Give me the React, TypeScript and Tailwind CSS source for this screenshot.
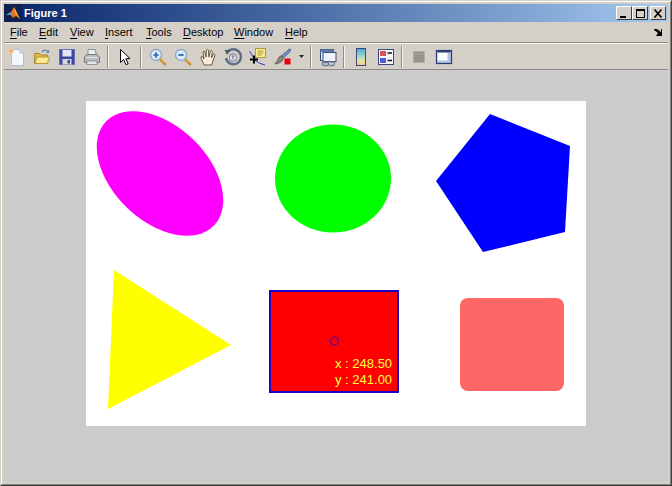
import React from "react";

function Ico({ children }: { children: React.ReactNode }) {
  return (
    <div className="w-[25px] h-[25px] flex items-center justify-center shrink-0">
      <svg width="20" height="20" viewBox="0 0 20 20" className="block">{children}</svg>
    </div>
  );
}

function Sep() {
  return (
    <div className="w-[8px] h-[25px] flex justify-center items-center shrink-0">
      <div className="w-[1px] h-[22px] bg-[#8f8d88]" />
      <div className="w-[1px] h-[22px] bg-[#f4f3ef]" />
    </div>
  );
}

function Lens({ plus }: { plus: boolean }) {
  return (
    <>
      <path d="M11.5 11.5 L17 17" stroke="#c98a2a" strokeWidth="2.6" strokeLinecap="round" />
      <path d="M12 11 L17 16" stroke="#f3c860" strokeWidth="1" />
      <circle cx="8" cy="8" r="5.5" fill="#dcecf8" stroke="#8aa4c4" strokeWidth="1.3" />
      <path d={plus ? "M5.3 8 H10.7 M8 5.3 V10.7" : "M5.3 8 H10.7"} stroke="#2f62b4" strokeWidth="1.7" />
    </>
  );
}

const menus = [
  { label: "File", cls: "w-[29px]" },
  { label: "Edit", cls: "w-[31px]" },
  { label: "View", cls: "w-[35px]" },
  { label: "Insert", cls: "w-[41px]" },
  { label: "Tools", cls: "w-[37px]" },
  { label: "Desktop", cls: "w-[51px]" },
  { label: "Window", cls: "w-[51px]" },
  { label: "Help", cls: "w-[30px]" },
];

export default function App() {
  return (
    <div className="w-[672px] h-[486px] overflow-hidden bg-[#d4d0c8] border-t border-l border-t-[#d4d0c8] border-l-[#d4d0c8] border-r border-b border-r-[#404040] border-b-[#404040]">
      <div className="w-full h-full flex flex-col border-t border-l border-t-white border-l-white border-r border-b border-r-[#808080] border-b-[#808080] p-[2px] font-['Liberation_Sans',Arial,sans-serif]">
        {/* Title bar */}
        <div className="h-[18px] shrink-0 flex items-center bg-gradient-to-r from-[#0a246a] to-[#a6caf0] pr-[2px]">
          <div className="w-[18px] h-[18px] bg-[#10204f] flex items-center justify-center shrink-0">
            <svg width="16" height="16" viewBox="0 0 16 16" className="block">
              <path d="M1 10 L6 7 L9 2 L13 10 L15 14 L11 11 L8 13 L5 9 Z" fill="#e8701a" />
              <path d="M1 10 L6 7 L8 9 L5 10 Z" fill="#4fa0d8" />
              <path d="M9 2 L13 10 L15 14 L10 8 Z" fill="#f4b040" />
            </svg>
          </div>
          <span className="ml-[2px] text-white text-[11px] font-bold leading-none">Figure 1</span>
          <div className="ml-auto flex items-center">
            <button className="w-[16px] h-[14px] bg-[#d4d0c8] border border-t-white border-l-white border-r-[#404040] border-b-[#404040] relative">
              <span className="absolute left-[3px] bottom-[1px] w-[6px] h-[2px] bg-black" />
            </button>
            <button className="w-[16px] h-[14px] bg-[#d4d0c8] border border-t-white border-l-white border-r-[#404040] border-b-[#404040] flex items-center justify-center">
              <span className="w-[9px] h-[9px] border border-t-2 border-black" />
            </button>
            <button className="ml-[2px] w-[16px] h-[14px] bg-[#d4d0c8] border border-t-white border-l-white border-r-[#404040] border-b-[#404040] flex items-center justify-center">
              <svg width="10" height="9" viewBox="0 0 10 9" className="block">
                <path d="M1.5 0.5 L8.5 8.5 M8.5 0.5 L1.5 8.5" stroke="#000" strokeWidth="1.6" />
              </svg>
            </button>
          </div>
        </div>

        {/* Menu bar */}
        <div className="h-[20px] shrink-0 flex items-center pl-[6px] pr-[5px] text-[11px] text-black leading-none">
          {menus.map((m) => (
            <span key={m.label} className={m.cls}>
              <span className="underline underline-offset-2">{m.label[0]}</span>
              {m.label.slice(1)}
            </span>
          ))}
          <svg width="10" height="9" viewBox="0 0 10 9" className="ml-auto block">
            <path d="M1 1 L4 1 L8 4 L8 1 L9 1 L9 8 L3 8 L5 5 L1 2 Z" fill="#000" />
          </svg>
        </div>
        <div className="h-[1px] shrink-0 bg-[#8d8b86]" />

        {/* Toolbar */}
        <div className="h-[26px] shrink-0 flex items-center border-t border-t-[#f4f3ef]">
          <Ico>
            <path d="M4.5 2.5 H13 L16.5 6 V18.5 H4.5 Z" fill="#f4f8fd" stroke="#a7bfd8" />
            <path d="M13 2.5 V6 H16.5" fill="#cfe0f0" stroke="#a7bfd8" />
            <circle cx="4" cy="4" r="2.4" fill="#f2a468" stroke="#f8d4a8" />
          </Ico>
          <Ico>
            <path d="M2.5 6.5 H8 L9.5 8 H15.5 V16.5 H2.5 Z" fill="#e0b840" stroke="#a88a30" />
            <path d="M3 16.5 L5 10 H17.5 L15.5 16.5 Z" fill="#fbe890" stroke="#b89a38" />
            <path d="M10 5 Q13 1.5 16 4.5" fill="none" stroke="#5f87a8" strokeWidth="1.4" />
            <path d="M17 2.8 V6 H14 Z" fill="#5f87a8" />
          </Ico>
          <Ico>
            <rect x="2.5" y="2.5" width="15" height="15" fill="#3f48a0" stroke="#6a6fb8" />
            <rect x="5.5" y="3" width="9" height="6.5" fill="#e4e6f4" />
            <rect x="5.5" y="12" width="9" height="5.5" fill="#d8d8e4" />
            <rect x="10.5" y="13" width="2.5" height="3.5" fill="#3f48a0" />
          </Ico>
          <Ico>
            <path d="M6 2.5 H13 L14.5 8 H6 Z" fill="#eef0f0" stroke="#8a8f94" />
            <path d="M2.5 9.5 L5 7.5 H15 L17.5 10 V15.5 H2.5 Z" fill="#b8bcbf" stroke="#74787c" />
            <rect x="5" y="14" width="10" height="3.5" fill="#e8e8e8" stroke="#74787c" strokeWidth="0.7" />
            <path d="M4 10.5 H15" stroke="#e4e6e8" />
          </Ico>
          <Sep />
          <Ico>
            <path d="M5.5 2.5 V15.5 L8.6 12.6 L11 17.7 L13.2 16.7 L10.8 11.8 L15 11.5 Z" fill="#fff" stroke="#000" strokeWidth="1" strokeLinejoin="miter" />
          </Ico>
          <Sep />
          <Ico><Lens plus /></Ico>
          <Ico><Lens plus={false} /></Ico>
          <Ico>
            <path d="M6 18 L3 11 Q2.6 9 4.6 9.6 L6 12 L5 5 Q5.4 3.4 6.8 4.6 L8 10 L8.4 3 Q9.6 1.6 10.6 3 L10.8 10 L12.4 4 Q13.8 3 14.4 4.6 L13.4 11 L15.4 7 Q17 6.6 17 8.4 L14.6 15 L13.6 18 Z" fill="#fde8d4" stroke="#55503c" strokeWidth="0.9" strokeLinejoin="round" />
          </Ico>
          <Ico>
            <path d="M4.6 5 A7.5 7.5 0 1 1 3 11" fill="none" stroke="#5f6f85" strokeWidth="2.4" />
            <path d="M1.5 3 L7.5 3 L4 8 Z" fill="#4c5c74" />
            <circle cx="10" cy="10.5" r="3.8" fill="#dfe3e8" stroke="#6e7c90" />
            <path d="M8.5 9 H11.5 M10 9 V12.5" stroke="#5a6880" />
          </Ico>
          <Ico>
            <path d="M1.5 4 L7 13 Q11 17 17 18" fill="none" stroke="#3a3ab8" strokeWidth="1" />
            <rect x="7.5" y="1.5" width="10" height="9" fill="#f8ec8c" stroke="#a89a40" />
            <path d="M9.5 4 H15.5 M9.5 6 H15.5 M9.5 8 H13.5" stroke="#a89a40" />
            <path d="M2 12.5 H10 M6 8.5 V16.5" stroke="#000" strokeWidth="2" />
          </Ico>
          <Ico>
            <path d="M16.8 1.8 Q18.4 2.8 17.2 4.4 L10.5 11 L8 9 Z" fill="#7590c8" stroke="#43568c" strokeWidth="0.8" />
            <path d="M8 9 L10.5 11 Q9.6 15 5 16.5 Q2.4 17.2 2 16.5 Q5 14 5 12 Q5.6 9.6 8 9 Z" fill="#8c8a7c" stroke="#55544a" strokeWidth="0.8" />
            <rect x="11.5" y="11.5" width="6" height="6" fill="#e8000c" />
          </Ico>
          <div className="w-[12px] h-[25px] flex items-center justify-center shrink-0">
            <svg width="5" height="3" viewBox="0 0 5 3" className="block"><path d="M0 0 H5 L2.5 3 Z" fill="#222" /></svg>
          </div>
          <Sep />
          <Ico>
            <rect x="2.5" y="2.5" width="13" height="11" fill="#e8eef6" stroke="#39507c" />
            <rect x="2.5" y="2.5" width="13" height="2.6" fill="#5f7ca8" />
            <rect x="5" y="5.5" width="13" height="9" fill="#f0f4fa" stroke="#39507c" />
            <path d="M5 15.5 H10 A2 2 0 0 1 10 18.5 H5.5 A1.6 1.6 0 0 1 5 15.5 M12 15 H15.5 A2 2 0 0 1 15.5 18.5 H11.5" fill="none" stroke="#6a7c9c" strokeWidth="1.3" />
          </Ico>
          <Sep />
          <Ico>
            <defs>
              <linearGradient id="cb" x1="0" y1="0" x2="0" y2="1">
                <stop offset="0" stopColor="#4aa4d8" />
                <stop offset="0.5" stopColor="#a8dcc8" />
                <stop offset="0.8" stopColor="#f4e48c" />
                <stop offset="1" stopColor="#f0b8a0" />
              </linearGradient>
            </defs>
            <rect x="5.5" y="1.5" width="9" height="17" fill="url(#cb)" stroke="#3a4a80" />
          </Ico>
          <Ico>
            <rect x="2.5" y="2.5" width="15" height="15" fill="#f4f6fa" stroke="#3a4a80" />
            <rect x="4" y="4" width="6" height="5" fill="#e05050" />
            <rect x="4" y="11" width="6" height="5" fill="#4a5ed0" />
            <path d="M11.5 6 H16 M11.5 13.5 H16" stroke="#111" strokeWidth="1.4" />
          </Ico>
          <Sep />
          <Ico>
            <rect x="4.5" y="4.5" width="11" height="11" fill="#96948f" stroke="#aeaca7" />
            <path d="M5 7 H15" stroke="#a8a6a2" />
          </Ico>
          <Ico>
            <rect x="2.5" y="3.5" width="15" height="13" fill="#b4c4de" stroke="#2a3878" strokeWidth="1.2" />
            <rect x="3.5" y="5.5" width="10" height="8" fill="#fafbfd" />
            <rect x="3.5" y="4" width="13" height="1.4" fill="#2a3878" />
          </Ico>
        </div>
        <div className="h-[1px] shrink-0 bg-[#8d8b86]" />

        {/* Figure canvas */}
        <div className="flex-1 bg-[#cccccc] flex justify-center pt-[31px]">
          <svg width="500" height="325" viewBox="86 101 500 325" className="block bg-white shrink-0">
            <ellipse cx="160" cy="173.5" rx="75" ry="47.5" transform="rotate(44 160 173.5)" fill="#ff00ff" />
            <ellipse cx="333" cy="178.5" rx="58" ry="54" fill="#00ff00" />
            <polygon points="490,114 570,146 565,232 483,252 436,181" fill="#0000ff" />
            <polygon points="114,270 231,345 108,409" fill="#ffff00" />
            <rect x="270" y="291" width="128" height="101" fill="#ff0000" stroke="#1a00c8" strokeWidth="2" />
            <rect x="460" y="298" width="104" height="93" rx="8" fill="#ff6666" />
            <circle cx="334.5" cy="341" r="4" fill="none" stroke="#2a10c8" strokeWidth="1" />
            <text x="335" y="368" fill="#ffff40" fontSize="13" fontFamily="'Liberation Sans', Arial, sans-serif">x : 248.50</text>
            <text x="335" y="384" fill="#ffff40" fontSize="13" fontFamily="'Liberation Sans', Arial, sans-serif">y : 241.00</text>
          </svg>
        </div>
      </div>
    </div>
  );
}
